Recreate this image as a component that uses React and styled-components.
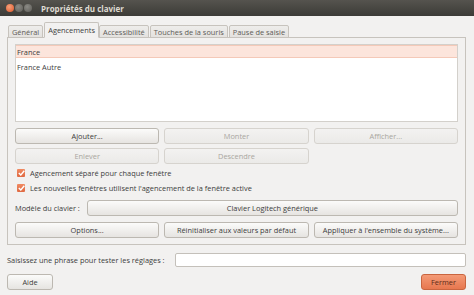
import React from "react";
import styled, { createGlobalStyle } from "styled-components";

const Global = createGlobalStyle`
  html, body { margin: 0; padding: 0; background: #f2f1f0; }
  body { font-family: "Open Sans", "Liberation Sans", sans-serif; font-size: 7.4px; color: #3c3c3c; }
  * { box-sizing: border-box; }
`;

const Win = styled.div`
  width: 474px;
  height: 295px;
  display: flex;
  flex-direction: column;
  background: #f2f1f0;
  overflow: hidden;
`;

const TitleBar = styled.div`
  height: 16px;
  flex: none;
  display: flex;
  align-items: center;
  padding-left: 6px;
  background: linear-gradient(#55534e, #3c3b37);
  color: #dfdbd2;
  font-weight: 700;
  font-size: 8px;
`;

const Dot = styled.span`
  width: 8px;
  height: 8px;
  flex: none;
  border-radius: 50%;
  margin-right: 1px;
  background: ${p => (p.close ? "radial-gradient(circle at 40% 35%, #f5a07a, #e0572a)" : "radial-gradient(circle at 40% 35%, #8b8a85, #5c5b56)")};
`;

const Title = styled.span`
  margin-left: 8px;
`;

const Body = styled.div`
  flex: 1;
  display: flex;
  flex-direction: column;
  padding: 6px 8px 0 7px;
`;

const Tabs = styled.div`
  display: flex;
  align-items: flex-end;
  height: 16px;
  padding-left: 1px;
  margin-bottom: -1px;
  position: relative;
  z-index: 1;
`;

const Tab = styled.div`
  height: ${p => (p.active ? "16px" : "13px")};
  padding: 0 3px;
  display: flex;
  align-items: center;
  border: 1px solid #c7c3bd;
  border-bottom: ${p => (p.active ? "1px solid #f2f1f0" : "1px solid #c7c3bd")};
  background: ${p => (p.active ? "#f2f1f0" : "linear-gradient(#eeedeb, #e4e2df)")};
  color: ${p => (p.active ? "#3c3c3c" : "#5d5b57")};
  border-radius: 2px 2px 0 0;
  margin-right: ${p => (p.active ? "0" : "1px")};
  white-space: nowrap;
`;

const Panel = styled.div`
  border: 1px solid #c7c3bd;
  background: #f2f1f0;
  padding: 6px 7px 6px 7px;
  display: flex;
  flex-direction: column;
  height: 208px;
`;

const List = styled.div`
  height: 78px;
  flex: none;
  background: #fff;
  border: 1px solid #d3d0cb;
  display: flex;
  flex-direction: column;
`;

const Item = styled.div`
  height: 13px;
  padding-left: 1px;
  display: flex;
  align-items: center;
  margin-top: ${p => (p.selected ? "0" : "2px")};
  background: ${p => (p.selected ? "#fce5dc" : "transparent")};
  border-top: 1px solid ${p => (p.selected ? "#f4c9b8" : "transparent")};
  border-bottom: 1px solid ${p => (p.selected ? "#f4c9b8" : "transparent")};
  color: #3c3c3c;
`;

const Grid = styled.div`
  display: grid;
  grid-template-columns: ${p => p.cols || "1fr 1fr 1fr"};
  column-gap: ${p => p.gap || 5}px;
  row-gap: 4px;
  margin-top: ${p => p.top || 0}px;
  align-items: center;
`;

const Button = styled.div`
  height: 16px;
  display: flex;
  align-items: center;
  justify-content: center;
  border: 1px solid ${p => (p.disabled ? "#d6d3ce" : "#bcb8b1")};
  border-radius: 3px;
  background: ${p => (p.disabled ? "linear-gradient(#f3f2f1, #ebeae8)" : "linear-gradient(#fbfbfa, #e6e4e1)")};
  color: ${p => (p.disabled ? "#a9a6a0" : "#3c3c3c")};
  white-space: nowrap;
  width: ${p => p.w || "auto"};
`;

const Check = styled.div`
  display: flex;
  align-items: center;
  height: 15px;
  margin-top: ${p => p.top || 0}px;
  padding-left: 2px;
  gap: 4px;
`;

const Box = styled.span`
  width: 8px;
  height: 8px;
  border-radius: 1px;
  background: linear-gradient(#f08a62, #df6a43);
  display: flex;
  align-items: center;
  justify-content: center;
`;

const Label = styled.span`
  padding-left: ${p => (p.flush ? 0 : 1)}px;
`;

const TestRow = styled.div`
  display: flex;
  align-items: center;
  margin-top: 8px;
  gap: 10px;
`;

const Input = styled.div`
  flex: 1;
  height: 14px;
  background: #fff;
  border: 1px solid #c4c0ba;
  border-radius: 2px;
`;

const Footer = styled.div`
  display: flex;
  justify-content: space-between;
  margin-top: 7px;
`;

const Primary = styled(Button)`
  border-color: #c9653f;
  background: linear-gradient(#f49a76, #e7774f);
  color: #5e2a18;
`;

const Tick = () => (
  <svg width="7" height="6" viewBox="0 0 7 6">
    <path d="M0.8 3 L2.8 5 L6.3 0.8" fill="none" stroke="#fff" strokeWidth="1.4" />
  </svg>
);

export default function App() {
  return (
    <>
      <Global />
      <Win>
        <TitleBar>
          <Dot close />
          <Dot />
          <Dot />
          <Title>Propriétés du clavier</Title>
        </TitleBar>
        <Body>
          <Tabs>
            <Tab>Général</Tab>
            <Tab active>Agencements</Tab>
            <Tab>Accessibilité</Tab>
            <Tab>Touches de la souris</Tab>
            <Tab>Pause de saisie</Tab>
          </Tabs>
          <Panel>
            <List>
              <Item selected>France</Item>
              <Item>France Autre</Item>
            </List>
            <Grid top={6}>
              <Button>Ajouter...</Button>
              <Button disabled>Monter</Button>
              <Button disabled>Afficher...</Button>
              <Button disabled>Enlever</Button>
              <Button disabled>Descendre</Button>
            </Grid>
            <Check top={2}>
              <Box><Tick /></Box>
              <Label>Agencement séparé pour chaque fenêtre</Label>
            </Check>
            <Check>
              <Box><Tick /></Box>
              <Label>Les nouvelles fenêtres utilisent l'agencement de la fenêtre active</Label>
            </Check>
            <Grid cols="auto 1fr" gap={7} top={5}>
              <Label flush>Modèle du clavier :</Label>
              <Button>Clavier Logitech générique</Button>
            </Grid>
            <Grid top={6}>
              <Button>Options...</Button>
              <Button>Réinitialiser aux valeurs par défaut</Button>
              <Button>Appliquer à l'ensemble du système...</Button>
            </Grid>
          </Panel>
          <TestRow>
            <span>Saisissez une phrase pour tester les réglages :</span>
            <Input />
          </TestRow>
          <Footer>
            <Button w="46px">Aide</Button>
            <Primary w="45px">Fermer</Primary>
          </Footer>
        </Body>
      </Win>
    </>
  );
}
